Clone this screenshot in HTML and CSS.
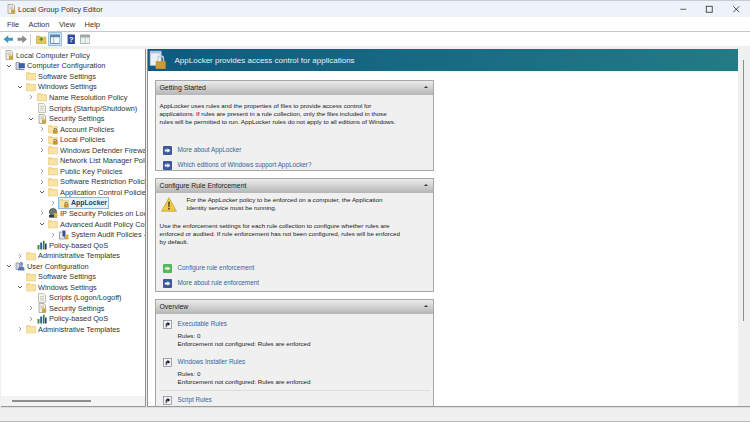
FILE: index.html
```html
<!DOCTYPE html>
<html>
	<head>
		<meta charset="UTF-8">
		<title>Local Group Policy Editor</title>
		<link rel="stylesheet" href="styles.css">
	</head>
	<body>
		<svg class="defs" width="0" height="0">
			<symbol id="folder" viewBox="0 0 10 10">
				<path d="M.5 1.500h3.200l1 1h4.800v6.500H.5z" fill="#f5d989" stroke="#e2c477" stroke-width=".5"/>
				<path d="M1 3.500h8v5H1z" fill="#f9e4a6"/>
			</symbol>
			<symbol id="lockfolder" viewBox="0 0 10 10">
				<path d="M.5 1.500h3.200l1 1h4.800v6.500H.5z" fill="#f5d989" stroke="#e2c477" stroke-width=".5"/>
				<path d="M1 3.500h8v5H1z" fill="#f9e4a6"/>
				<path d="M5 6h4.500v3.600H5z" fill="#c9962e"/>
				<path d="M6 6V4.600h2.400V6" fill="none" stroke="#6f6a5a" stroke-width=".8"/>
			</symbol>
			<symbol id="doc" viewBox="0 0 10 10">
				<path d="M1.500.5h5l2 2v7h-7z" fill="#f6f4ea" stroke="#a9a9a0" stroke-width=".7"/>
				<path d="M3 3.500h4M3 5.200h4M3 7h4" stroke="#aeb3bb" stroke-width=".6"/>
			</symbol>
			<symbol id="policy" viewBox="0 0 10 10">
				<path d="M2 .5h5l1.500 1.500v7.500H2z" fill="#f1eee0" stroke="#99968a" stroke-width=".7"/>
				<path d="M3.500 3h3.500M3.500 4.600h3.500" stroke="#a5a5a0" stroke-width=".6"/>
				<path d="M5 5.500h4.200v4H5z" fill="#c9a544"/>
			</symbol>
			<symbol id="computer" viewBox="0 0 10 10">
				<path d="M1 1.500h3.500v7H1z" fill="#d4d8e4" stroke="#5c6680" stroke-width=".6"/>
				<path d="M4 2.500h5.500v4.500H4z" fill="#3d62b0" stroke="#2c3e6e" stroke-width=".5"/>
				<path d="M4.500 8h5v1.200h-5z" fill="#8b93a8"/>
			</symbol>
			<symbol id="user" viewBox="0 0 10 10">
				<path d="M1 2h3.500v6.500H1z" fill="#d4d8e4" stroke="#6a7490" stroke-width=".6"/>
				<circle cx="6.300" cy="3" r="1.900" fill="#7a93c4"/>
				<path d="M3 9.500c0-3.400 1.600-4.200 3.300-4.200s3.200.8 3.200 4.200z" fill="#5876ad"/>
			</symbol>
			<symbol id="shield" viewBox="0 0 10 10">
				<circle cx="5" cy="4" r="3.600" fill="#6a7c70" stroke="#333" stroke-width=".6"/>
				<path d="M1 7h8v2.600H1z" fill="#2f3a44"/>
				<path d="M6 5h3.500v4.500H6z" fill="#d5b04a"/>
			</symbol>
			<symbol id="audit" viewBox="0 0 10 10">
				<path d="M.5 2h5v7h-5z" fill="#e7e8ee" stroke="#5f6a85" stroke-width=".6"/>
				<path d="M3.500 .5h3v6h-3z" fill="#36528f"/>
				<path d="M6 4.500h3.500v5H6z" fill="#d4b04c"/>
			</symbol>
			<symbol id="qos" viewBox="0 0 10 10">
				<path d="M.5 5h2v4.500h-2z" fill="#3b8f45"/>
				<path d="M3.200 2.500h2v7h-2z" fill="#2b5f96"/>
				<path d="M6 .8h1.600v8.700H6z" fill="#3b7d4a"/>
				<path d="M8 3.500h1.600v6H8z" fill="#23406e"/>
			</symbol>
			<symbol id="goarrow" viewBox="0 0 10 10">
				<rect width="10" height="10" rx="1" fill="#3f5a9b"/>
				<path d="M2 4h3V2.400L8.200 5 5 7.600V6H2z" fill="#fff"/>
			</symbol>
			<symbol id="gogreen" viewBox="0 0 10 10">
				<rect width="10" height="10" rx="1" fill="#53b75f"/>
				<path d="M2 4h3V2.400L8.200 5 5 7.600V6H2z" fill="#eaf6e6"/>
			</symbol>
			<symbol id="shortcut" viewBox="0 0 10 10">
				<rect x=".5" y=".5" width="9" height="9" fill="#f4f4f6" stroke="#7e8698" stroke-width=".8"/>
				<path d="M3 8V5c0-1 .6-1.500 1.500-1.500H5V2l3 2.400L5 6.600V5h-.3C4.200 5 4 5.300 4 6v2z" fill="#16181f"/>
			</symbol>
			<symbol id="chev-r" viewBox="0 0 6 6"><path d="M2 1l2 2-2 2" fill="none" stroke="#8a8a8a" stroke-width=".8"/></symbol>
			<symbol id="chev-d" viewBox="0 0 6 6"><path d="M1 2l2 2 2-2" fill="none" stroke="#444" stroke-width=".9"/></symbol>
		</svg>

		<div class="window">
			<div class="titlebar">
				<svg class="titleicon"><use href="#policy"/></svg>
				<span class="titletext">Local Group Policy Editor</span>
				<div class="winbtns">
					<svg viewBox="0 0 10 10"><path d="M1.500 5h7" stroke="#444" stroke-width="1"/></svg>
					<svg viewBox="0 0 10 10"><rect x="1.500" y="1.500" width="7" height="7" fill="none" stroke="#333" stroke-width="1"/></svg>
					<svg viewBox="0 0 10 10"><path d="M1.500 1.500l7 7M8.500 1.500l-7 7" stroke="#333" stroke-width="1"/></svg>
				</div>
			</div>
			<div class="menubar">
				<span>File</span><span>Action</span><span>View</span><span>Help</span>
			</div>
			<div class="toolbar">
				<svg class="tool" viewBox="0 0 10 10"><path d="M.5 5L5 1.200V3.500h4.500v3H5v2.300z" fill="#3c9ac4"/></svg>
				<svg class="tool" viewBox="0 0 10 10"><path d="M9.500 5L5 1.200V3.500H.5v3H5v2.300z" fill="#8c8c8c"/></svg>
				<i class="sep"></i>
				<svg class="tool" viewBox="0 0 10 10"><path d="M.5 2h3.200l1 1h4.800v6.500H.5z" fill="#e5c65c" stroke="#b89a3e" stroke-width=".5"/><path d="M5 7V4M3.500 5.300L5 3.800l1.500 1.500" fill="none" stroke="#3d8b3d" stroke-width="1"/></svg>
				<span class="toolon"><svg class="tool" viewBox="0 0 10 10"><rect x=".5" y="1" width="9" height="8" fill="#f4f8fc" stroke="#4f7396" stroke-width=".7"/><path d="M.5 1h9v1.800h-9zM3.500 3v6" fill="#5c87ad" stroke="#5c87ad" stroke-width=".5"/></svg></span>
				<svg class="tool helpbtn" viewBox="0 0 10 10"><rect x="1.500" y=".5" width="7" height="9" fill="#2f4aa0"/><text x="5" y="7.500" class="help">?</text></svg>
				<svg class="tool" viewBox="0 0 10 10"><rect x=".5" y="1" width="9" height="8" fill="#eef0ee" stroke="#9aa3a3" stroke-width=".7"/><path d="M.5 1h9v2h-9zM5 3v6" fill="#9fa8a8" stroke="#9fa8a8" stroke-width=".5"/></svg>
			</div>
			<div class="strip"></div>

			<div class="panes">
				<div class="treepane">
					<div class="tree">
						<div class="row lv0"><svg class="ic"><use href="#policy"/></svg><span>Local Computer Policy</span></div>
						<div class="row lv1"><svg class="ch"><use href="#chev-d"/></svg><svg class="ic"><use href="#computer"/></svg><span>Computer Configuration</span></div>
						<div class="row lv2"><i class="ch"></i><svg class="ic"><use href="#folder"/></svg><span>Software Settings</span></div>
						<div class="row lv2"><svg class="ch"><use href="#chev-d"/></svg><svg class="ic"><use href="#folder"/></svg><span>Windows Settings</span></div>
						<div class="row lv3"><svg class="ch"><use href="#chev-r"/></svg><svg class="ic"><use href="#folder"/></svg><span>Name Resolution Policy</span></div>
						<div class="row lv3"><i class="ch"></i><svg class="ic"><use href="#doc"/></svg><span>Scripts (Startup/Shutdown)</span></div>
						<div class="row lv3"><svg class="ch"><use href="#chev-d"/></svg><svg class="ic"><use href="#policy"/></svg><span>Security Settings</span></div>
						<div class="row lv4"><svg class="ch"><use href="#chev-r"/></svg><svg class="ic"><use href="#lockfolder"/></svg><span>Account Policies</span></div>
						<div class="row lv4"><svg class="ch"><use href="#chev-r"/></svg><svg class="ic"><use href="#lockfolder"/></svg><span>Local Policies</span></div>
						<div class="row lv4"><svg class="ch"><use href="#chev-r"/></svg><svg class="ic"><use href="#folder"/></svg><span>Windows Defender Firewall with Advanced Security</span></div>
						<div class="row lv4"><i class="ch"></i><svg class="ic"><use href="#folder"/></svg><span>Network List Manager Policies</span></div>
						<div class="row lv4"><svg class="ch"><use href="#chev-r"/></svg><svg class="ic"><use href="#folder"/></svg><span>Public Key Policies</span></div>
						<div class="row lv4"><svg class="ch"><use href="#chev-r"/></svg><svg class="ic"><use href="#folder"/></svg><span>Software Restriction Policies</span></div>
						<div class="row lv4"><svg class="ch"><use href="#chev-d"/></svg><svg class="ic"><use href="#folder"/></svg><span>Application Control Policies</span></div>
						<div class="row lv5"><svg class="ch"><use href="#chev-r"/></svg><span class="selected"><svg class="ic"><use href="#lockfolder"/></svg>AppLocker</span></div>
						<div class="row lv4"><svg class="ch"><use href="#chev-r"/></svg><svg class="ic"><use href="#shield"/></svg><span>IP Security Policies on Local Computer</span></div>
						<div class="row lv4"><svg class="ch"><use href="#chev-d"/></svg><svg class="ic"><use href="#folder"/></svg><span>Advanced Audit Policy Configuration</span></div>
						<div class="row lv5"><svg class="ch"><use href="#chev-r"/></svg><svg class="ic"><use href="#audit"/></svg><span>System Audit Policies - Local Group Policy</span></div>
						<div class="row lv3"><i class="ch"></i><svg class="ic"><use href="#qos"/></svg><span>Policy-based QoS</span></div>
						<div class="row lv2"><svg class="ch"><use href="#chev-r"/></svg><svg class="ic"><use href="#folder"/></svg><span>Administrative Templates</span></div>
						<div class="row lv1"><svg class="ch"><use href="#chev-d"/></svg><svg class="ic"><use href="#user"/></svg><span>User Configuration</span></div>
						<div class="row lv2"><i class="ch"></i><svg class="ic"><use href="#folder"/></svg><span>Software Settings</span></div>
						<div class="row lv2"><svg class="ch"><use href="#chev-d"/></svg><svg class="ic"><use href="#folder"/></svg><span>Windows Settings</span></div>
						<div class="row lv3"><i class="ch"></i><svg class="ic"><use href="#doc"/></svg><span>Scripts (Logon/Logoff)</span></div>
						<div class="row lv3"><svg class="ch"><use href="#chev-r"/></svg><svg class="ic"><use href="#policy"/></svg><span>Security Settings</span></div>
						<div class="row lv3"><svg class="ch"><use href="#chev-r"/></svg><svg class="ic"><use href="#qos"/></svg><span>Policy-based QoS</span></div>
						<div class="row lv2"><svg class="ch"><use href="#chev-r"/></svg><svg class="ic"><use href="#folder"/></svg><span>Administrative Templates</span></div>
					</div>
					<div class="hscroll"><i></i></div>
				</div>

				<div class="mainpane">
					<div class="content">
						<div class="banner">
							<svg class="bannericon" viewBox="0 0 18 18">
								<path d="M1 1h10v13H1z" fill="#e9f0f7" stroke="#9db4c8" stroke-width=".6"/>
								<path d="M1 1h10v2H1z" fill="#a9c4da"/>
								<path d="M6 10h9v7H6z" fill="#cf9a35"/>
								<path d="M8 10V7.500c0-2.800 5-2.800 5 0V10" fill="none" stroke="#c8ccd0" stroke-width="1.300"/>
							</svg>
							<span>AppLocker provides access control for applications</span>
						</div>
						<div class="cards">
							<div class="card card1">
								<div class="cardhead"><span>Getting Started</span><i class="up"></i></div>
								<div class="cardbody">
									<p class="para">AppLocker uses rules and the properties of files to provide access control for<br>applications. If rules are present in a rule collection, only the files included in those<br>rules will be permitted to run. AppLocker rules do not apply to all editions of Windows.</p>
									<div class="links">
										<a><svg><use href="#goarrow"/></svg>More about AppLocker</a>
										<a><svg><use href="#goarrow"/></svg>Which editions of Windows support AppLocker?</a>
									</div>
								</div>
							</div>
							<div class="card card2">
								<div class="cardhead"><span>Configure Rule Enforcement</span><i class="up"></i></div>
								<div class="cardbody">
									<div class="warn">
										<svg viewBox="0 0 14 13"><path d="M7 .6L13.500 12.400H.5z" fill="#f3cb3a" stroke="#b99a45" stroke-width=".6"/><path d="M6.300 4h1.400l-.2 4.800h-1zM6.300 9.500h1.400v1.400H6.300z" fill="#3a3a3a"/></svg>
										<p>For the AppLocker policy to be enforced on a computer, the Application<br>Identity service must be running.</p>
									</div>
									<p class="para">Use the enforcement settings for each rule collection to configure whether rules are<br>enforced or audited. If rule enforcement has not been configured, rules will be enforced<br>by default.</p>
									<div class="links">
										<a><svg><use href="#gogreen"/></svg>Configure rule enforcement</a>
										<a><svg><use href="#goarrow"/></svg>More about rule enforcement</a>
									</div>
								</div>
							</div>
							<div class="card card3">
								<div class="cardhead"><span>Overview</span><i class="up"></i></div>
								<div class="cardbody">
									<div class="rule">
										<a><svg><use href="#shortcut"/></svg>Executable Rules</a>
										<p>Rules: 0<br>Enforcement not configured: Rules are enforced</p>
									</div>
									<div class="rule">
										<a><svg><use href="#shortcut"/></svg>Windows Installer Rules</a>
										<p>Rules: 0<br>Enforcement not configured: Rules are enforced</p>
									</div>
									<hr>
									<div class="rule">
										<a><svg><use href="#shortcut"/></svg>Script Rules</a>
									</div>
								</div>
							</div>
						</div>
					</div>
					<div class="vscroll"><i></i></div>
				</div>
			</div>
			<div class="statusbar"></div>
		</div>
	</body>
</html>
```

FILE: styles.css
```css
* {
	box-sizing: border-box;
}
html, body {
	margin: 0;
	height: 100%;
	overflow: hidden;
}
body {
	font-family: "Liberation Sans", Arial, sans-serif;
	color: #222;
	background: #fff;
}
.defs {
	display: block;
	height: 0;
}
.window {
	width: 750px;
	height: 422px;
	display: flex;
	flex-direction: column;
}
.titlebar {
	height: 17px;
	flex: none;
	display: flex;
	align-items: center;
	padding-left: 6px;
	background: #eef3fa;
	border-top: 1px solid #c9ccd2;
}
.titleicon {
	width: 10px;
	height: 10px;
	margin-right: 2px;
}
.titletext {
	font-size: 7.5px;
	color: #333;
}
.winbtns {
	margin-left: auto;
	display: flex;
	gap: 18px;
	padding-right: 10px;
}
.winbtns svg {
	width: 8.500px;
	height: 8.500px;
}
.menubar {
	height: 15px;
	flex: none;
	display: flex;
	align-items: center;
	gap: 9.500px;
	padding-left: 7px;
	font-size: 7.5px;
	color: #333;
	border-bottom: 1px solid #c8c8c8;
}
.toolbar {
	height: 14px;
	flex: none;
	display: flex;
	align-items: center;
	padding-left: 3px;
	gap: 3px;
}
.tool {
	width: 10.500px;
	height: 10.500px;
	display: block;
}
.sep {
	width: 1px;
	height: 11px;
	background: #ccc;
	margin-right: 2px;
}
.toolon {
	padding: 1px;
	margin-left: -2px;
	background: #cfe4f5;
	border: 1px solid #9cc3e2;
}
.helpbtn {
	margin-left: 1px;
}
.help {
	font: bold 7px "Liberation Sans", sans-serif;
	fill: #fff;
	text-anchor: middle;
}
.strip {
	height: 3px;
	flex: none;
	background: #efefef;
}
.panes {
	flex: 1;
	min-height: 0;
	display: flex;
	background: #f0f0f0;
}
.statusbar {
	height: 15px;
	flex: none;
	background: #f0f0f0;
	border-top: 1px solid #dedede;
	border-bottom: 1px solid #bbb;
}

/* tree */
.treepane {
	width: 144.500px;
	flex: none;
	margin-left: 1px;
	background: #fff;
	border-right: 1px solid #8f8f8f;
	border-bottom: 1px solid #9a9a9a;
	display: flex;
	flex-direction: column;
	overflow: hidden;
}
.tree {
	flex: 1;
	min-height: 0;
	padding-top: 1px;
	overflow: hidden;
}
.row {
	height: 10.550px;
	display: flex;
	align-items: center;
	font-size: 7.400px;
	color: #333;
	white-space: nowrap;
}
.row .ch {
	width: 6px;
	height: 6px;
	flex: none;
	margin-right: 3px;
}
.row .ic {
	width: 10px;
	height: 10px;
	flex: none;
	margin-right: 2px;
}
.lv0 { padding-left: 3px; }
.lv1 { padding-left: 5px; }
.lv2 { padding-left: 16px; }
.lv3 { padding-left: 27px; }
.lv4 { padding-left: 38px; }
.lv5 { padding-left: 49px; }
.selected {
	display: flex;
	align-items: center;
	height: 10.550px;
	color: #1f3f66;
	font-size: 6.900px;
	font-weight: bold;
	padding-right: 1px;
	background: #e6f2fb;
	outline: 1px solid #8fb9dc;
}
.hscroll {
	height: 10px;
	flex: none;
	background: #f3f3f3;
	padding: 4px 0 0 11px;
}
.hscroll i {
	display: block;
	width: 79px;
	height: 2px;
	background: #8e8e8e;
}

/* right side */
.mainpane {
	flex: 1;
	min-width: 0;
	display: flex;
	margin-left: 1px;
	background: #fff;
	border-bottom: 1px solid #9a9a9a;
	border-left: 1px solid #8f8f8f;
}
.content {
	flex: 1;
	min-width: 0;
	overflow: hidden;
}
.vscroll {
	width: 12px;
	flex: none;
	background: #f0f0f0;
	padding: 11px 0 0 5px;
}
.vscroll i {
	display: block;
	width: 1px;
	height: 261px;
	background: #8e8e8e;
}
.banner {
	height: 22px;
	display: flex;
	align-items: center;
	padding-left: 1px;
	gap: 6px;
	background: linear-gradient(to right, #0e5a80, #237b85);
	color: #e6f1f5;
	font-size: 8px;
}
.bannericon {
	width: 20px;
	height: 20px;
}
.cards {
	padding: 9px 0 0 7px;
	width: 286px;
	display: flex;
	flex-direction: column;
	gap: 7px;
}
.card {
	border: 1px solid #a6a6a6;
	background: #f0f0f0;
	flex: none;
}
.card1 { height: 91px; }
.card2 { height: 114px; }
.card3 { height: 120px; }
.cardhead {
	height: 14px;
	display: flex;
	align-items: center;
	justify-content: space-between;
	padding: 0 4px 2px;
	font-size: 6.900px;
	color: #222;
	background: linear-gradient(to bottom, #ececec, #b5b5b5);
}
.up {
	width: 0;
	height: 0;
	border: 2px solid transparent;
	border-top: 0;
	border-bottom: 2px solid #333;
	margin-right: 1px;
}
.cardbody {
	padding: 3px 3px 0 4px;
	font-size: 6.250px;
	line-height: 7.800px;
}
.card1 .cardbody {
	padding-top: 7px;
}
.card3 .cardbody {
	padding-top: 5px;
}
.para {
	margin: 0;
}
.links {
	margin: 0 0 0 3px;
	display: flex;
	flex-direction: column;
}
.card1 .links {
	margin-top: 20px;
	gap: 5px;
}
.card2 .links {
	margin-top: 18px;
	gap: 5px;
}
a {
	display: flex;
	align-items: center;
	height: 10px;
	color: #34659b;
	font-size: 6.350px;
}
a svg {
	width: 9px;
	height: 9px;
	flex: none;
	margin-right: 6px;
}
.warn {
	display: flex;
	align-items: flex-start;
	margin-bottom: 10px;
}
.warn svg {
	width: 16px;
	height: 15px;
	flex: none;
	margin: 1px 10px 0 1px;
}
.warn p {
	margin: 0;
}
.rule {
	padding-left: 3px;
	margin-bottom: 9.500px;
}
.rule a {
	margin-bottom: 3px;
}
.rule p {
	margin: 0 0 0 15px;
}
hr {
	border: 0;
	border-top: 1px solid #dcdcdc;
	margin: -5px 0 4px;
}
```
